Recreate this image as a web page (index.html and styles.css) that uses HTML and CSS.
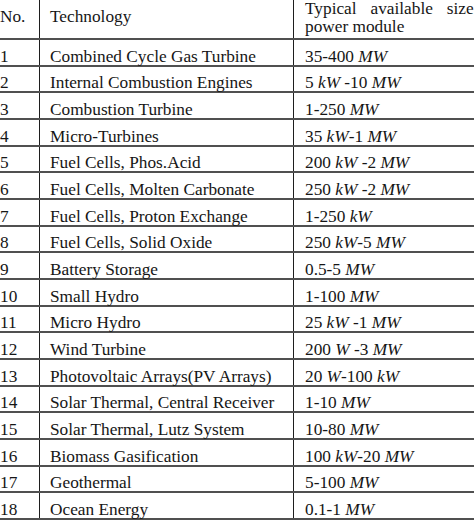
FILE: index.html
```html
<!DOCTYPE html>
<html lang="en">
<head>
<meta charset="utf-8">
<title>Distributed generation technologies</title>
<link rel="stylesheet" href="styles.css">
</head>
<body>
<div class="table">
  <div class="row head">
    <div class="c1 hcell">No.</div>
    <div class="c2 hcell">Technology</div>
    <div class="c3 hcell2"><span class="just">Typical available size of power module</span></div>
  </div>
  <div class="row"><div class="c1">1</div><div class="c2">Combined Cycle Gas Turbine</div><div class="c3">35-400 <i>MW</i></div></div>
  <div class="row"><div class="c1">2</div><div class="c2">Internal Combustion Engines</div><div class="c3">5 <i>kW</i> -10 <i>MW</i></div></div>
  <div class="row"><div class="c1">3</div><div class="c2">Combustion Turbine</div><div class="c3">1-250 <i>MW</i></div></div>
  <div class="row"><div class="c1">4</div><div class="c2">Micro-Turbines</div><div class="c3">35 <i>kW</i>-1 <i>MW</i></div></div>
  <div class="row"><div class="c1">5</div><div class="c2">Fuel Cells, Phos.Acid</div><div class="c3">200 <i>kW</i> -2 <i>MW</i></div></div>
  <div class="row"><div class="c1">6</div><div class="c2">Fuel Cells, Molten Carbonate</div><div class="c3">250 <i>kW</i> -2 <i>MW</i></div></div>
  <div class="row"><div class="c1">7</div><div class="c2">Fuel Cells, Proton Exchange</div><div class="c3">1-250 <i>kW</i></div></div>
  <div class="row"><div class="c1">8</div><div class="c2">Fuel Cells, Solid Oxide</div><div class="c3">250 <i>kW</i>-5 <i>MW</i></div></div>
  <div class="row"><div class="c1">9</div><div class="c2">Battery Storage</div><div class="c3">0.5-5 <i>MW</i></div></div>
  <div class="row"><div class="c1">10</div><div class="c2">Small Hydro</div><div class="c3">1-100 <i>MW</i></div></div>
  <div class="row"><div class="c1">11</div><div class="c2">Micro Hydro</div><div class="c3">25 <i>kW</i> -1 <i>MW</i></div></div>
  <div class="row"><div class="c1">12</div><div class="c2">Wind Turbine</div><div class="c3">200 <i>W</i> -3 <i>MW</i></div></div>
  <div class="row"><div class="c1">13</div><div class="c2">Photovoltaic Arrays(PV Arrays)</div><div class="c3">20 <i>W</i>-100 <i>kW</i></div></div>
  <div class="row"><div class="c1">14</div><div class="c2">Solar Thermal, Central Receiver</div><div class="c3">1-10 <i>MW</i></div></div>
  <div class="row"><div class="c1">15</div><div class="c2">Solar Thermal, Lutz System</div><div class="c3">10-80 <i>MW</i></div></div>
  <div class="row"><div class="c1">16</div><div class="c2">Biomass Gasification</div><div class="c3">100 <i>kW</i>-20 <i>MW</i></div></div>
  <div class="row"><div class="c1">17</div><div class="c2">Geothermal</div><div class="c3">5-100 <i>MW</i></div></div>
  <div class="row"><div class="c1">18</div><div class="c2">Ocean Energy</div><div class="c3">0.1-1 <i>MW</i></div></div>
</div>
</body>
</html>
```
FILE: styles.css
```css
html, body {
  margin: 0;
  padding: 0;
  background: #ffffff;
  overflow: hidden;
}
body {
  width: 474px;
  height: 521px;
  font-family: "Liberation Serif", "Times New Roman", serif;
  font-size: 17.3px;
  color: #161616;
}
.table {
  width: 560px;
}
.row {
  display: flex;
  height: 26.67px;
  box-sizing: border-box;
  border-bottom: 2px solid #505050;
  line-height: 16px;
}
.row.head {
  height: 40px;
}
.c1, .c2, .c3 {
  box-sizing: border-box;
  white-space: nowrap;
  padding-top: 8.67px;
}
.c1 {
  width: 39px;
  flex: none;
}
.c2 {
  width: 254px;
  flex: none;
  border-left: 1px solid #1e1e1e;
  padding-left: 10px;
}
.c3 {
  flex: 1;
  border-left: 1px solid #1e1e1e;
  padding-left: 11px;
}
.head .hcell {
  padding-top: 8px;
  line-height: 18px;
}
.head .hcell2 {
  padding-top: 0;
  line-height: 18px;
  white-space: normal;
}
.just {
  display: block;
  width: 197px;
  text-align: justify;
}
i {
  font-style: italic;
}
```
